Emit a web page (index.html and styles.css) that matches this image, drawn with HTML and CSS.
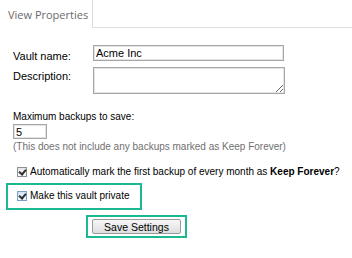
FILE: index.html
```html
<!DOCTYPE html>
<html lang="en">
<head>
    <meta charset="UTF-8">
    <meta name="viewport" content="width=device-width, initial-scale=1.0">
    <title>Vault Properties</title>
    <link rel="stylesheet" href="styles.css">
</head>
<body>
    <nav class="tabs">
        <a href="#" class="tab active">View Properties</a>
        <div class="tab-fill"></div>
    </nav>

    <form class="vault-form" onsubmit="return false">
        <div class="field-grid">
            <label for="vaultName" class="name-label">Vault name:</label>
            <input type="text" id="vaultName" name="vaultName" value="Acme Inc">
            <label for="description" class="desc-label">Description:</label>
            <textarea id="description" name="description"></textarea>
        </div>

        <div class="backups">
            <label for="maxBackups">Maximum backups to save:</label>
            <input type="text" id="maxBackups" name="maxBackups" value="5">
            <div class="note">(This does not include any backups marked as Keep Forever)</div>
        </div>

        <label class="check-row">
            <input type="checkbox" name="keepMonthly" checked>
            <span>Automatically mark the first backup of every month as <b>Keep Forever</b>?</span>
        </label>

        <div class="highlight private-box">
            <label class="check-row">
                <input type="checkbox" name="private" class="hover" checked>
                <span>Make this vault private</span>
            </label>
        </div>

        <div class="highlight save-box">
            <button type="submit" class="save-btn">Save Settings</button>
        </div>
    </form>
</body>
</html>
```

FILE: styles.css
```css
:root {
    --line: #dddddd;
    --highlight: #1bb991;
    --text: #000;
    --muted: #707070;
}

* {
    margin: 0;
    padding: 0;
    box-sizing: border-box;
}

body {
    font-family: 'Liberation Sans', Arial, sans-serif;
    font-size: 10px;
    color: var(--text);
    background: #fff;
}

.tabs {
    display: flex;
    height: 28px;
}

.tab {
    width: 93px;
    padding: 7px 0 0 8px;
    border-right: 1px solid var(--line);
    font-family: 'Open Sans', sans-serif;
    font-size: 11px;
    color: #6a6a6a;
    text-decoration: none;
    white-space: nowrap;
}

.tab-fill {
    flex: 1;
    height: 28px;
    border-bottom: 1px solid var(--line);
}

.vault-form {
    padding-left: 13px;
}

.field-grid {
    display: grid;
    grid-template-columns: 80px 192px;
    row-gap: 4px;
    margin-top: 17px;
    font-size: 11px;
}

.field-grid label {
    line-height: 13px;
}

.name-label {
    padding-top: 5px;
}

.desc-label {
    padding-top: 3px;
}

.field-grid input,
.field-grid textarea,
.backups input {
    font-family: 'Liberation Sans', Arial, sans-serif;
    font-size: 11px;
    color: var(--text);
    border: 1px solid #a6a6a6;
    box-shadow: inset 0 0 0 1px #e4e4e4;
    outline: none;
}

.field-grid input {
    width: 191px;
    height: 16px;
    padding: 0 2px;
}

.field-grid textarea {
    width: 192px;
    height: 27px;
    padding: 1px 2px;
}

.backups {
    margin-top: 17px;
    line-height: 12px;
}

.backups label {
    display: block;
}

.backups input {
    display: block;
    width: 34px;
    height: 15px;
    margin-top: 1px;
    padding: 0 2px;
}

.note {
    margin-top: 2px;
    color: var(--muted);
}

.check-row {
    display: flex;
    align-items: center;
    line-height: 12px;
    white-space: nowrap;
}

.vault-form > .check-row {
    margin-top: 13px;
}

.check-row input {
    appearance: none;
    -webkit-appearance: none;
    position: relative;
    width: 10px;
    height: 10px;
    margin: 0 3px 0 4px;
    border: 1px solid #8f8f8f;
    background: linear-gradient(#e6e6e6, #fbfbfb);
    flex-shrink: 0;
}

.check-row input.hover {
    border-color: #7b9fc9;
    background: linear-gradient(#d3e4f7, #eef5fd);
}

.check-row input:checked::after {
    content: '';
    position: absolute;
    left: 2px;
    top: 0;
    width: 3px;
    height: 5px;
    border: solid #2e2e2e;
    border-width: 0 2px 2px 0;
    transform: rotate(40deg);
}

.highlight {
    width: fit-content;
    border: 2px solid var(--highlight);
}

.private-box {
    margin: 5px 0 0 -7px;
    padding: 5px 10px 6px 9px;
}

.private-box .check-row input {
    margin-left: 0;
}

.save-box {
    margin: 5px 0 0 73px;
    padding: 2px 4px;
}

.save-btn {
    display: block;
    width: 89px;
    height: 15px;
    font-family: 'Liberation Sans', Arial, sans-serif;
    font-size: 10.5px;
    color: #000;
    border: 1px solid #9a9a9a;
    border-radius: 2px;
    background: linear-gradient(#f7f7f7, #dedede);
    cursor: pointer;
}
```
